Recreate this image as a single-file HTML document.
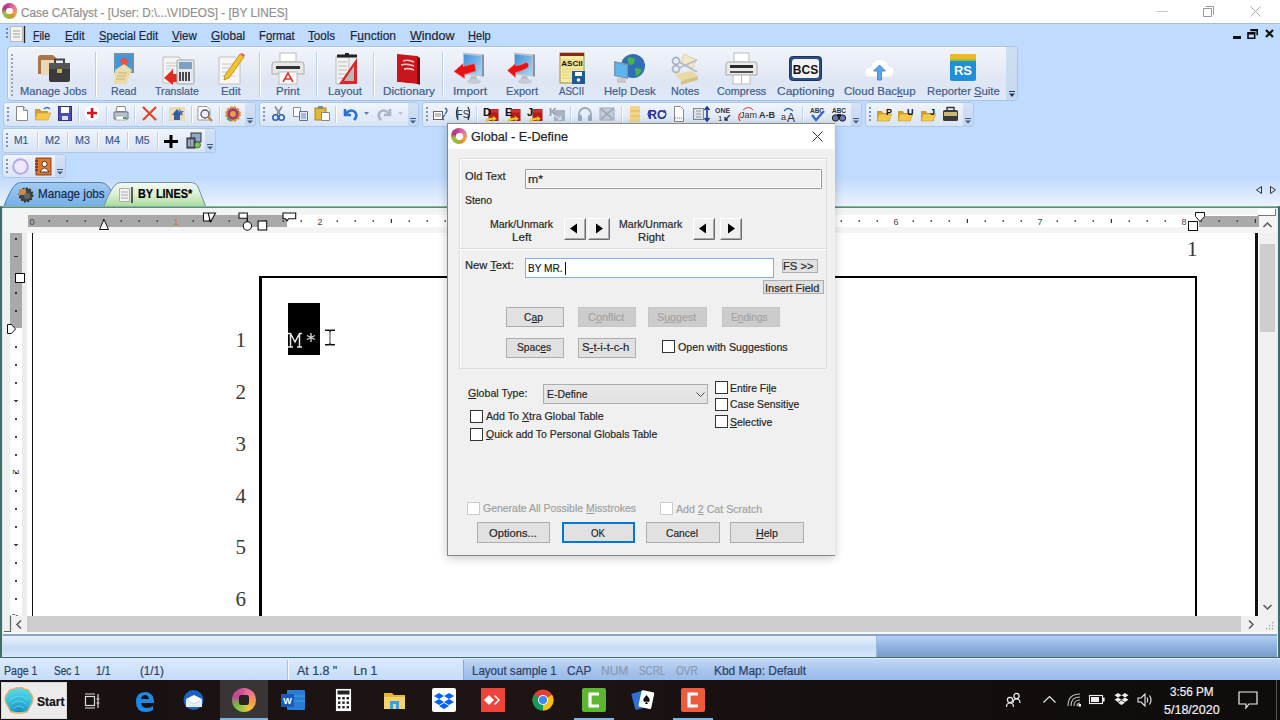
<!DOCTYPE html>
<html><head><meta charset="utf-8"><style>
*{box-sizing:border-box;margin:0;padding:0}
html,body{width:1280px;height:720px;overflow:hidden;background:#BFDBFF;font-family:"Liberation Sans",sans-serif;position:relative}
.a{position:absolute}
.t{position:absolute;white-space:nowrap;line-height:1;transform-origin:0 0;-webkit-text-stroke:0.2px currentColor}
.t u{text-decoration:underline;text-decoration-thickness:1px;text-underline-offset:1px}
svg{position:absolute;overflow:visible}
</style></head><body>
<div class="a" style="left:0;top:0;width:1280px;height:23px;background:#fff"></div>
<div class="a" style="left:1.5px;top:3px;width:15.5px;height:15.5px;border-radius:50%;background:conic-gradient(from 0deg,#D0509A 0deg,#E8789A 60deg,#F2A048 110deg,#E88A30 150deg,#8CC040 200deg,#A8C040 250deg,#B03A80 290deg,#C8408E 360deg)"></div><div class="a" style="left:6px;top:7.5px;width:6.5px;height:6.5px;border-radius:45%;background:#fff"></div>
<div class="t" id="t0" style="left:20.60px;top:5.99px;font-size:13.30px;color:#8F8F8F;transform:scaleX(0.8841);">Case CATalyst - [User: D:\...\VIDEOS] - [BY LINES]</div>
<div class="a" style="left:1157px;top:11px;width:11px;height:1px;background:#C9C9C9"></div>
<svg style="left:1203px;top:6px" width="11" height="11"><path d="M2.5 .5h8v8M.5 2.5h8v8h-8z" fill="none" stroke="#9A9A9A"/></svg>
<svg style="left:1250px;top:6px" width="11" height="11"><path d="M.5 .5l10 10M10.5 .5l-10 10" stroke="#A8A8A8" stroke-width="1"/></svg>
<div class="a" style="left:0;top:23px;width:1280px;height:24px;background:#BFDBFF;border-top:1px solid #A7BEDD"></div>
<div class="a" style="left:6px;top:28px;width:2px;height:12px;background:repeating-linear-gradient(#6F88AE 0 2px,transparent 2px 4px)"></div>
<svg style="left:10px;top:25px" width="16" height="19"><rect x=".5" y="1.5" width="12" height="15" fill="#F2F2F2" stroke="#B8B8B8"/><path d="M3 6h7M3 9h7M3 12h7" stroke="#A0A0A0"/><path d="M14.5 1v17" stroke="#222" stroke-width="1.3"/></svg>
<div class="t" id="t1" style="left:33.00px;top:30.27px;font-size:12.50px;color:#1B2638;transform:scaleX(0.8500);"><u>F</u>ile</div>
<div class="t" id="t2" style="left:65.00px;top:30.27px;font-size:12.50px;color:#1B2638;transform:scaleX(0.9091);"><u>E</u>dit</div>
<div class="t" id="t3" style="left:99.00px;top:30.27px;font-size:12.50px;color:#1B2638;transform:scaleX(0.8939);"><u>S</u>pecial Edit</div>
<div class="t" id="t4" style="left:172.00px;top:30.27px;font-size:12.50px;color:#1B2638;transform:scaleX(0.9259);"><u>V</u>iew</div>
<div class="t" id="t5" style="left:211.00px;top:30.27px;font-size:12.50px;color:#1B2638;transform:scaleX(0.9444);"><u>G</u>lobal</div>
<div class="t" id="t6" style="left:259.00px;top:30.27px;font-size:12.50px;color:#1B2638;transform:scaleX(0.9000);">F<u>o</u>rmat</div>
<div class="t" id="t7" style="left:308.00px;top:30.27px;font-size:12.50px;color:#1B2638;transform:scaleX(0.9310);"><u>T</u>ools</div>
<div class="t" id="t8" style="left:350.00px;top:30.27px;font-size:12.50px;color:#1B2638;transform:scaleX(0.9583);">F<u>u</u>nction</div>
<div class="t" id="t9" style="left:410.00px;top:30.27px;font-size:12.50px;color:#1B2638;transform:scaleX(1.0000);"><u>W</u>indow</div>
<div class="t" id="t10" style="left:468.00px;top:30.27px;font-size:12.50px;color:#1B2638;transform:scaleX(0.8846);"><u>H</u>elp</div>
<div class="a" style="left:1233px;top:36px;width:8px;height:2.5px;background:#111"></div>
<svg style="left:1247px;top:29px" width="11" height="10"><path d="M3.5 .8h6.7v5.5M1 3.8h6.7v5.5H1z" fill="none" stroke="#111" stroke-width="1.6"/><path d="M1 4.5h6.7" stroke="#111" stroke-width="2.2"/><path d="M3.5 1.2h6.7" stroke="#111" stroke-width="2"/></svg>
<svg style="left:1265px;top:29px" width="9" height="9"><path d="M1 1l7 7M8 1l-7 7" stroke="#111" stroke-width="2.2"/></svg>
<div class="a" style="left:7px;top:46px;width:1011px;height:55px;border:1px solid #A9C1E2;border-radius:4px;background:linear-gradient(#F1F4FA 0%,#E8ECF6 40%,#DFE6F3 62%,#DDE8F8 100%);box-shadow:inset 1px 1px 0 #F8FAFE"></div>
<div class="a" style="left:1006px;top:47px;width:11px;height:53px;background:linear-gradient(#D0DEF2,#C6D8F0);border-radius:0 3px 3px 0"></div>
<svg style="left:1008px;top:91px" width="8" height="7"><path d="M1 .5h6" stroke="#1E3A6A"/><path d="M1 2.5h6l-3 3.5z" fill="#1E3A6A"/></svg>
<div class="a" style="left:11px;top:54px;width:2px;height:42px;background:repeating-linear-gradient(#8DA4C4 0 2px,transparent 2px 4px)"></div>
<div class="a" style="left:95px;top:52px;width:1px;height:45px;background:#BCCFE8;box-shadow:1px 0 0 #fff"></div>
<div class="a" style="left:259px;top:52px;width:1px;height:45px;background:#BCCFE8;box-shadow:1px 0 0 #fff"></div>
<div class="a" style="left:316px;top:52px;width:1px;height:45px;background:#BCCFE8;box-shadow:1px 0 0 #fff"></div>
<div class="a" style="left:373px;top:52px;width:1px;height:45px;background:#BCCFE8;box-shadow:1px 0 0 #fff"></div>
<div class="a" style="left:442px;top:52px;width:1px;height:45px;background:#BCCFE8;box-shadow:1px 0 0 #fff"></div>
<div class="t" id="t11" style="left:20.30px;top:85.87px;font-size:11.80px;color:#3D5C8E;transform:scaleX(0.9437);">Manage Jobs</div>
<div class="t" id="t12" style="left:111.30px;top:85.87px;font-size:11.80px;color:#3D5C8E;transform:scaleX(0.9000);">Read</div>
<div class="t" id="t13" style="left:155.40px;top:85.87px;font-size:11.80px;color:#3D5C8E;transform:scaleX(0.9000);">Translate</div>
<div class="t" id="t14" style="left:221.40px;top:85.87px;font-size:11.80px;color:#3D5C8E;transform:scaleX(0.9650);">Edit</div>
<div class="t" id="t15" style="left:276.40px;top:85.87px;font-size:11.80px;color:#3D5C8E;transform:scaleX(0.9750);">Print</div>
<div class="t" id="t16" style="left:328.20px;top:85.87px;font-size:11.80px;color:#3D5C8E;transform:scaleX(0.9571);">Layout</div>
<div class="t" id="t17" style="left:382.50px;top:85.87px;font-size:11.80px;color:#3D5C8E;transform:scaleX(0.9885);">Dictionary</div>
<div class="t" id="t18" style="left:453.00px;top:85.87px;font-size:11.80px;color:#3D5C8E;transform:scaleX(1.0212);">Import</div>
<div class="t" id="t19" style="left:505.70px;top:85.87px;font-size:11.80px;color:#3D5C8E;transform:scaleX(0.9382);">Export</div>
<div class="t" id="t20" style="left:559.00px;top:85.87px;font-size:11.80px;color:#3D5C8E;transform:scaleX(0.8161);">ASCII</div>
<div class="t" id="t21" style="left:603.60px;top:85.87px;font-size:11.80px;color:#3D5C8E;transform:scaleX(0.9481);">Help Desk</div>
<div class="t" id="t22" style="left:670.70px;top:85.87px;font-size:11.80px;color:#3D5C8E;transform:scaleX(0.9129);">Notes</div>
<div class="t" id="t23" style="left:716.50px;top:85.87px;font-size:11.80px;color:#3D5C8E;transform:scaleX(0.9167);">Compress</div>
<div class="t" id="t24" style="left:776.70px;top:85.87px;font-size:11.80px;color:#3D5C8E;transform:scaleX(1.0161);">Captioning</div>
<div class="t" id="t25" style="left:844.30px;top:85.87px;font-size:11.80px;color:#3D5C8E;transform:scaleX(0.9753);">Cloud Bac<u>k</u>up</div>
<div class="t" id="t26" style="left:926.70px;top:85.87px;font-size:11.80px;color:#3D5C8E;transform:scaleX(0.9566);">Reporter <u>S</u>uite</div>
<svg style="left:37px;top:52px" width="34" height="32" viewBox="0 0 34 32">
<path d="M1 6q0-3 3-3h12l3 3v16H1z" fill="#A8764A"/><path d="M4 8h14v15H4z" fill="#E9D8B8"/>
<rect x="12" y="11" width="21" height="19" rx="2" fill="#3A3A3A"/><rect x="12" y="11" width="21" height="6" fill="#555"/>
<path d="M18 11V7.5h9V11" fill="none" stroke="#444" stroke-width="2"/><rect x="20" y="17" width="5" height="4" fill="#C8B34A"/></svg>
<svg style="left:112px;top:52px" width="24" height="33" viewBox="0 0 24 33">
<rect x="2" y="1" width="20" height="20" fill="#6F8FAE"/><rect x="4" y="3" width="16" height="16" fill="#3A9CE0"/>
<path d="M12 5l6 5h-3v3H9v-3H6z" fill="#E8504A"/>
<path d="M3 18l9-6 8 6-6 14H2z" fill="#EADBA8"/><path d="M6 21h9M5 24h9M4 27h9" stroke="#C9B27A"/></svg>
<svg style="left:162px;top:54px" width="33" height="31" viewBox="0 0 33 31">
<path d="M1 3h16l4 4v22H1z" fill="#F4F4F4" stroke="#BDBDBD"/><path d="M4 9h12M4 12h12M4 15h8" stroke="#C8C8C8"/>
<path d="M2 24l9-9v5h9v8h-9v3z" fill="#E02A20"/>
<rect x="15" y="6" width="17" height="24" rx="1" fill="#E5E9EE" stroke="#9AA"/><rect x="17" y="8" width="13" height="7" fill="#7FA0C0"/>
<path d="M18 18v9M21 18v9M24 18v9M27 18v9" stroke="#222" stroke-width="1.6"/></svg>
<svg style="left:218px;top:52px" width="27" height="33" viewBox="0 0 27 33">
<path d="M1 5h16l5 5v22H1z" fill="#F6F6F6" stroke="#C0C0C0"/><path d="M4 12h13M4 16h13M4 20h13M4 24h13" stroke="#C8C8C8"/>
<path d="M22 2l4 3-15 21-5 2 1-5z" fill="#F2C230" stroke="#B58A10" stroke-width=".8"/><path d="M22 2l4 3 1-2-3-2z" fill="#E06070"/></svg>
<svg style="left:271px;top:52px" width="34" height="33" viewBox="0 0 34 33">
<rect x="9" y="1" width="16" height="9" fill="#fff" stroke="#BBB"/>
<path d="M3 10h28q2 0 2 3v9H1v-9q0-3 2-3z" fill="#E8E8E8" stroke="#AAA"/><rect x="5" y="14" width="24" height="3" fill="#333"/>
<rect x="8" y="20" width="18" height="12" fill="#fff" stroke="#BBB"/><path d="M12 30l5-9 5 9M14 27h6" fill="none" stroke="#E53A2A" stroke-width="1.6"/></svg>
<svg style="left:333px;top:52px" width="27" height="33" viewBox="0 0 27 33">
<path d="M3 5h13v27H3z" fill="#F2F2F2" stroke="#BBB"/><path d="M5 10h9M5 14h9M5 18h9M5 22h9M5 26h9" stroke="#BBB"/>
<path d="M4 4h20" stroke="#222" stroke-width="3"/><path d="M12 2h4" stroke="#222" stroke-width="2"/>
<path d="M24 6v26H6z" fill="#D8262A"/><path d="M21 14v15h-10z" fill="#B9B9B9"/></svg>
<svg style="left:395px;top:52px" width="27" height="33" viewBox="0 0 27 33">
<path d="M2 2l20 2v28L2 30z" fill="#C9151B"/><path d="M22 4l3 2v27l-3-1z" fill="#7A0A0E"/><path d="M2 30l20 2 3 1-20-1z" fill="#E8E8E8"/>
<path d="M8 9q5-2 11 1M6 13q6-2 13 1M9 17q5-1 10 1" stroke="#F6C8C8" stroke-width="1.6" fill="none"/></svg>
<svg style="left:453px;top:52px" width="32" height="32" viewBox="0 0 32 32"><defs><linearGradient id="scri" x1="0" y1="0" x2="1" y2="1"><stop offset="0" stop-color="#3E8ED6"/><stop offset="1" stop-color="#A6D8F6"/></linearGradient></defs><path d="M10 0.5l20 2v22l-20-2z" fill="#B9C3CF"/><path d="M11 2.5l17 1.8v18.5l-17-1.8z" fill="url(#scri)"/><path d="M30 2.5v22" stroke="#8894A4" stroke-width="2"/><path d="M18 24h5l2 5h-9z" fill="#B8BEC6"/><ellipse cx="21" cy="29.5" rx="7" ry="2.5" fill="#C6CBD2"/><path d="M1 19.5L10 11.5V14.5L21.5 11.5L23 19L11.5 22.5V26.5Z" fill="#E81212" stroke="#F27070" stroke-width=".6"/></svg>
<svg style="left:507px;top:52px" width="30" height="32" viewBox="0 0 30 32"><defs><linearGradient id="scre" x1="0" y1="0" x2="1" y2="1"><stop offset="0" stop-color="#3E8ED6"/><stop offset="1" stop-color="#A6D8F6"/></linearGradient></defs><path d="M7 0.5l20 2v22l-20-2z" fill="#B9C3CF"/><path d="M8 2.5l17 1.8v18.5l-17-1.8z" fill="url(#scre)"/><path d="M27 2.5v22" stroke="#8894A4" stroke-width="2"/><path d="M15 24h5l2 5h-9z" fill="#B8BEC6"/><ellipse cx="18" cy="29.5" rx="7" ry="2.5" fill="#C6CBD2"/><path d="M.5 18.5L8.5 11.5V14Q15 13 19 10.5Q22.5 11 21 15.5Q15 19 8.5 20.5V25.5Z" fill="#E81212" stroke="#F27070" stroke-width=".6"/></svg>
<svg style="left:559px;top:52px" width="27" height="33" viewBox="0 0 27 33">
<rect x="1" y="1" width="24" height="30" fill="#F6ECA0" stroke="#A08A50"/><rect x="1" y="1" width="24" height="3" fill="#8A2A1A"/>
<path d="M3 8h20M3 11h20M3 14h20M3 17h20M3 20h20M3 23h20M3 26h20" stroke="#E0CF80"/>
<text x="13" y="14" font-family="Liberation Sans" font-weight="bold" font-size="8" text-anchor="middle" fill="#111">ASCII</text>
<rect x="13" y="19" width="13" height="13" fill="#1E5A9A"/><rect x="16" y="20" width="7" height="4" fill="#fff"/><circle cx="19.5" cy="28" r="1.8" fill="#fff"/></svg>
<svg style="left:613px;top:52px" width="33" height="33" viewBox="0 0 33 33">
<circle cx="20" cy="14" r="12" fill="#2E6FB8"/><path d="M14 6q4-2 8 1l-1 5-5 1zM22 16q4 0 7 2-2 5-6 6z" fill="#4CAF50"/>
<path d="M1 9l14 3v15L1 24z" fill="#7C95B0"/><path d="M2.5 11l11 2.4v12L2.5 23z" fill="#5AB6F0"/>
<path d="M4 26h8l1 5H4z" fill="#C8C8C8"/></svg>
<svg style="left:670px;top:52px" width="30" height="33" viewBox="0 0 30 33">
<path d="M14 2l12 6-3 8-12-5z" fill="#F3E9C8" stroke="#D7C99A" stroke-width=".8"/>
<circle cx="6" cy="9" r="3.5" fill="none" stroke="#A9B4C2" stroke-width="1.8"/><circle cx="6" cy="17" r="3.5" fill="none" stroke="#A9B4C2" stroke-width="1.8"/>
<path d="M9 10l18 10M9 16l18-8" stroke="#B3BCC8" stroke-width="1.8"/>
<path d="M5 22l17-3 6 5-17 5z" fill="#EAD9A2"/><path d="M11 29l17-5v4l-17 5z" fill="#D7C387"/></svg>
<svg style="left:725px;top:52px" width="33" height="33" viewBox="0 0 33 33">
<rect x="9" y="1" width="15" height="9" fill="#fff" stroke="#BBB"/>
<path d="M3 10h27q2 0 2 3v10H1V13q0-3 2-3z" fill="#EAEAEA" stroke="#AAA"/><rect x="5" y="13" width="23" height="3" fill="#2A2A2A"/><rect x="5" y="19" width="23" height="2" fill="#555"/>
<rect x="8" y="23" width="17" height="9" fill="#fff" stroke="#BBB"/><path d="M16.5 23v9" stroke="#BBB"/></svg>
<svg style="left:789px;top:56px" width="33" height="25" viewBox="0 0 33 25">
<rect x=".5" y=".5" width="32" height="24" rx="3" fill="#2C4E86" stroke="#1B345E"/><rect x="3" y="3" width="27" height="19" rx="3" fill="#F2F2F2"/>
<text x="16.5" y="17.5" font-family="Liberation Sans" font-weight="bold" font-size="12" text-anchor="middle" fill="#111">BCS</text></svg>
<svg style="left:864px;top:57px" width="31" height="26" viewBox="0 0 31 26">
<path d="M7 20q-6 0-6-5t6-5q1-8 9-8 7 0 9 7 5 0 5 5.5T25 20z" fill="#fff" stroke="#E3E8EE"/>
<path d="M15.5 8l-6 6h4v9h4v-9h4z" fill="#5EA3EE" stroke="#3A78C8" stroke-width=".8"/></svg>
<svg style="left:950px;top:54px" width="27" height="28" viewBox="0 0 27 28">
<rect x="0" y="0" width="26" height="27" rx="2" fill="#1E8FD8"/><path d="M0 2q0-2 2-2h22q2 0 2 2v3H0z" fill="#F5B820"/><path d="M0 5h26v2H0z" fill="#8DC63F"/>
<text x="13" y="21" font-family="Liberation Sans" font-weight="bold" font-size="13" text-anchor="middle" fill="#fff">RS</text></svg>
<div class="a" style="left:3px;top:102px;width:253px;height:25px;border:1px solid #B0C8E6;border-radius:3px;background:linear-gradient(#F0F5FC,#E4ECF8 50%,#D8E4F5)"></div><div class="a" style="left:7px;top:107px;width:2px;height:15px;background:repeating-linear-gradient(#7D94B8 0 2px,transparent 2px 4px)"></div><div class="a" style="left:245px;top:103px;width:10px;height:23px;background:linear-gradient(#D4E2F5,#C2D5F0);border-radius:0 2px 2px 0"></div><svg style="left:246px;top:118px" width="8" height="7"><path d="M1 .5h6" stroke="#3C5A88"/><path d="M1 2.5h6l-3 3z" fill="#3C5A88"/></svg>
<div class="a" style="left:259px;top:102px;width:160px;height:25px;border:1px solid #B0C8E6;border-radius:3px;background:linear-gradient(#F0F5FC,#E4ECF8 50%,#D8E4F5)"></div><div class="a" style="left:263px;top:107px;width:2px;height:15px;background:repeating-linear-gradient(#7D94B8 0 2px,transparent 2px 4px)"></div><div class="a" style="left:408px;top:103px;width:10px;height:23px;background:linear-gradient(#D4E2F5,#C2D5F0);border-radius:0 2px 2px 0"></div><svg style="left:409px;top:118px" width="8" height="7"><path d="M1 .5h6" stroke="#3C5A88"/><path d="M1 2.5h6l-3 3z" fill="#3C5A88"/></svg>
<div class="a" style="left:422px;top:102px;width:440px;height:25px;border:1px solid #B0C8E6;border-radius:3px;background:linear-gradient(#F0F5FC,#E4ECF8 50%,#D8E4F5)"></div><div class="a" style="left:426px;top:107px;width:2px;height:15px;background:repeating-linear-gradient(#7D94B8 0 2px,transparent 2px 4px)"></div><div class="a" style="left:851px;top:103px;width:10px;height:23px;background:linear-gradient(#D4E2F5,#C2D5F0);border-radius:0 2px 2px 0"></div><svg style="left:852px;top:118px" width="8" height="7"><path d="M1 .5h6" stroke="#3C5A88"/><path d="M1 2.5h6l-3 3z" fill="#3C5A88"/></svg>
<div class="a" style="left:865px;top:102px;width:109px;height:25px;border:1px solid #B0C8E6;border-radius:3px;background:linear-gradient(#F0F5FC,#E4ECF8 50%,#D8E4F5)"></div><div class="a" style="left:869px;top:107px;width:2px;height:15px;background:repeating-linear-gradient(#7D94B8 0 2px,transparent 2px 4px)"></div><div class="a" style="left:963px;top:103px;width:10px;height:23px;background:linear-gradient(#D4E2F5,#C2D5F0);border-radius:0 2px 2px 0"></div><svg style="left:964px;top:118px" width="8" height="7"><path d="M1 .5h6" stroke="#3C5A88"/><path d="M1 2.5h6l-3 3z" fill="#3C5A88"/></svg>
<div class="a" style="left:2px;top:128px;width:214px;height:25px;border:1px solid #B0C8E6;border-radius:3px;background:linear-gradient(#F0F5FC,#E4ECF8 50%,#D8E4F5)"></div><div class="a" style="left:6px;top:133px;width:2px;height:15px;background:repeating-linear-gradient(#7D94B8 0 2px,transparent 2px 4px)"></div><div class="a" style="left:205px;top:129px;width:10px;height:23px;background:linear-gradient(#D4E2F5,#C2D5F0);border-radius:0 2px 2px 0"></div><svg style="left:206px;top:144px" width="8" height="7"><path d="M1 .5h6" stroke="#3C5A88"/><path d="M1 2.5h6l-3 3z" fill="#3C5A88"/></svg>
<div class="a" style="left:2px;top:154px;width:64px;height:24px;border:1px solid #B0C8E6;border-radius:3px;background:linear-gradient(#F0F5FC,#E4ECF8 50%,#D8E4F5)"></div><div class="a" style="left:6px;top:159px;width:2px;height:14px;background:repeating-linear-gradient(#7D94B8 0 2px,transparent 2px 4px)"></div><div class="a" style="left:55px;top:155px;width:10px;height:22px;background:linear-gradient(#D4E2F5,#C2D5F0);border-radius:0 2px 2px 0"></div><svg style="left:56px;top:169px" width="8" height="7"><path d="M1 .5h6" stroke="#3C5A88"/><path d="M1 2.5h6l-3 3z" fill="#3C5A88"/></svg>
<div class="a" style="left:78px;top:106px;width:1px;height:17px;background:#BFD0E8;box-shadow:1px 0 0 #fff"></div>
<div class="a" style="left:106px;top:106px;width:1px;height:17px;background:#BFD0E8;box-shadow:1px 0 0 #fff"></div>
<div class="a" style="left:134px;top:106px;width:1px;height:17px;background:#BFD0E8;box-shadow:1px 0 0 #fff"></div>
<div class="a" style="left:162px;top:106px;width:1px;height:17px;background:#BFD0E8;box-shadow:1px 0 0 #fff"></div>
<div class="a" style="left:191px;top:106px;width:1px;height:17px;background:#BFD0E8;box-shadow:1px 0 0 #fff"></div>
<div class="a" style="left:219px;top:106px;width:1px;height:17px;background:#BFD0E8;box-shadow:1px 0 0 #fff"></div>
<div class="a" style="left:335px;top:106px;width:1px;height:17px;background:#BFD0E8;box-shadow:1px 0 0 #fff"></div>
<div class="a" style="left:476px;top:106px;width:1px;height:17px;background:#BFD0E8;box-shadow:1px 0 0 #fff"></div>
<div class="a" style="left:570px;top:106px;width:1px;height:17px;background:#BFD0E8;box-shadow:1px 0 0 #fff"></div>
<div class="a" style="left:621px;top:106px;width:1px;height:17px;background:#BFD0E8;box-shadow:1px 0 0 #fff"></div>
<div class="a" style="left:802px;top:106px;width:1px;height:17px;background:#BFD0E8;box-shadow:1px 0 0 #fff"></div>
<div class="a" style="left:37px;top:132px;width:1px;height:17px;background:#BFD0E8;box-shadow:1px 0 0 #fff"></div>
<div class="a" style="left:67px;top:132px;width:1px;height:17px;background:#BFD0E8;box-shadow:1px 0 0 #fff"></div>
<div class="a" style="left:97px;top:132px;width:1px;height:17px;background:#BFD0E8;box-shadow:1px 0 0 #fff"></div>
<div class="a" style="left:127px;top:132px;width:1px;height:17px;background:#BFD0E8;box-shadow:1px 0 0 #fff"></div>
<div class="a" style="left:157px;top:132px;width:1px;height:17px;background:#BFD0E8;box-shadow:1px 0 0 #fff"></div>
<svg style="left:16px;top:106px" width="12" height="15" viewBox="0 0 12 15"><path d="M.5 .5h7l4 4v10h-11z" fill="#fff" stroke="#8A8A8A"/><path d="M7.5 .5v4h4" fill="#DDD" stroke="#8A8A8A"/></svg>
<svg style="left:34px;top:106px" width="17" height="15" viewBox="0 0 17 15"><path d="M1 3h5l1 2h7v9H1z" fill="#C9A030"/><path d="M3 7h14l-3 7H1z" fill="#F5C84A" stroke="#C9A030" stroke-width=".6"/><path d="M10 3q3-3 6 0" fill="none" stroke="#3A6AB0" stroke-width="1.4"/></svg>
<svg style="left:58px;top:106px" width="14" height="15" viewBox="0 0 14 15"><rect x=".5" y=".5" width="13" height="14" fill="#4A4FB0" stroke="#2E3380"/><rect x="3" y="1" width="8" height="6" fill="#fff"/><rect x="4" y="10" width="6" height="4" fill="#DDE"/></svg>
<svg style="left:84px;top:105px" width="16" height="16" viewBox="0 0 16 16"><circle cx="8" cy="8" r="7.5" fill="#fff"/><path d="M8 3v10M3 8h10" stroke="#E0101A" stroke-width="2.6"/></svg>
<svg style="left:113px;top:106px" width="16" height="15" viewBox="0 0 16 15"><path d="M4 .5h8l1 5H3z" fill="#fff" stroke="#888"/><path d="M1 6h14v7H1z" fill="#B9C4D0" stroke="#6A7888"/><rect x="3" y="10" width="10" height="4" fill="#fff" stroke="#888" stroke-width=".6"/><rect x="10" y="11" width="3" height="2" fill="#2DA84A"/></svg>
<svg style="left:141px;top:106px" width="17" height="15" viewBox="0 0 17 15"><path d="M2 1l13 13M15 1L2 14" stroke="#E0452A" stroke-width="2.2"/></svg>
<svg style="left:169px;top:106px" width="16" height="15" viewBox="0 0 16 15"><rect x="0" y="1" width="16" height="14" fill="#E9DDB6"/><path d="M3 9l5-6 5 6-2 0v5H5V9z" fill="#3A5AA0"/><path d="M10 2l2 3 3 0-2 2 1 3-3-2z" fill="#4A6CC0"/></svg>
<svg style="left:197px;top:106px" width="16" height="16" viewBox="0 0 16 16"><path d="M1 .5h9l3 3V14H1z" fill="#fff" stroke="#999"/><circle cx="8" cy="8" r="4" fill="#EEF" stroke="#555" stroke-width="1.3"/><path d="M11 11l4 4" stroke="#C08030" stroke-width="2.2"/></svg>
<svg style="left:225px;top:106px" width="16" height="16" viewBox="0 0 16 16"><circle cx="8" cy="8" r="6.5" fill="#9B3A7A" stroke="#E08A20" stroke-width="2.6" stroke-dasharray="2.2 1.2"/><circle cx="8" cy="8" r="3" fill="#E6A23A"/><path d="M2 12l4 3" stroke="#4AA84A" stroke-width="2"/></svg>
<svg style="left:272px;top:106px" width="13" height="15" viewBox="0 0 13 15"><path d="M3 .5l5 8M10 .5l-5 8" stroke="#7A8798" stroke-width="1.5"/><circle cx="3.5" cy="11.5" r="2.7" fill="none" stroke="#2A63B8" stroke-width="1.6"/><circle cx="9.5" cy="11.5" r="2.7" fill="none" stroke="#2A63B8" stroke-width="1.6"/></svg>
<svg style="left:293px;top:106px" width="15" height="15" viewBox="0 0 15 15"><path d="M.5 1.5h7v9h-7z" fill="#fff" stroke="#7E8FA8"/><path d="M6.5 5.5h8v9h-8z" fill="#DDE7F4" stroke="#5A74A0"/><path d="M8 8h5M8 10h5M8 12h5" stroke="#7E8FA8"/></svg>
<svg style="left:314px;top:106px" width="16" height="15" viewBox="0 0 16 15"><rect x="1" y="2" width="11" height="12" fill="#E2B83A" stroke="#A88420"/><rect x="4" y="0" width="5" height="3" fill="#888"/><path d="M7.5 6.5h8v8h-8z" fill="#fff" stroke="#888"/></svg>
<svg style="left:342px;top:106px" width="17" height="15" viewBox="0 0 17 15"><path d="M3 3v6h6" fill="none" stroke="#2A73D0" stroke-width="2.6"/><path d="M3 9q5-7 10-3 3 4-1 8" fill="none" stroke="#2A73D0" stroke-width="2.6"/></svg>
<svg style="left:364px;top:112px" width="5" height="3" viewBox="0 0 5 3"><path d="M0 0h5l-2.5 3z" fill="#5A7AA8"/></svg>
<svg style="left:377px;top:106px" width="16" height="15" viewBox="0 0 16 15"><path d="M13 3v6H7" fill="none" stroke="#A9B6C6" stroke-width="2.6"/><path d="M13 9q-5-7-10-3-3 4 1 8" fill="none" stroke="#A9B6C6" stroke-width="2.6"/></svg>
<svg style="left:398px;top:112px" width="5" height="3" viewBox="0 0 5 3"><path d="M0 0h5l-2.5 3z" fill="#B9C5D6"/></svg>
<svg style="left:433px;top:107px" width="17" height="14" viewBox="0 0 17 14"><rect x=".5" y="4.5" width="9" height="8" fill="#fff" stroke="#666"/><path d="M2 7h6M2 9h6" stroke="#888"/><path d="M12 1q4 2 0 6M11 13q-3-2 1-5" fill="none" stroke="#3050A0" stroke-width="1.3"/></svg>
<svg style="left:454px;top:106px" width="18" height="15" viewBox="0 0 18 15"><path d="M4 1q-3 6 0 13M14 1q3 6 0 13" fill="none" stroke="#333" stroke-width="1.3"/><text x="9" y="11.5" font-family="Liberation Sans" font-size="10" text-anchor="middle" fill="#333">FS</text></svg>
<svg style="left:483px;top:106px" width="17" height="16" viewBox="0 0 17 16"><rect x="5.5" y="3" width="10" height="12" fill="#B81A1A"/><rect x="6" y="3.5" width="9" height="3" fill="#D03030"/><text x="0" y="10" font-family="Liberation Sans" font-weight="bold" font-size="11" fill="#111">D</text><path d="M2.5 14.2Q6 11.5 10.5 11.8L10 10l3.5 2.8-3.3 2.2.2-1.6Q6 14 3.5 15.5z" fill="#F5E020" stroke="#E0B000" stroke-width=".5"/></svg>
<svg style="left:505px;top:106px" width="17" height="16" viewBox="0 0 17 16"><rect x="5.5" y="3" width="10" height="12" fill="#B81A1A"/><rect x="6" y="3.5" width="9" height="3" fill="#D03030"/><text x="0" y="10" font-family="Liberation Sans" font-weight="bold" font-size="11" fill="#111">E</text><path d="M2.5 14.2Q6 11.5 10.5 11.8L10 10l3.5 2.8-3.3 2.2.2-1.6Q6 14 3.5 15.5z" fill="#F5E020" stroke="#E0B000" stroke-width=".5"/></svg>
<svg style="left:527px;top:106px" width="17" height="16" viewBox="0 0 17 16"><rect x="5.5" y="3" width="10" height="12" fill="#B81A1A"/><rect x="6" y="3.5" width="9" height="3" fill="#D03030"/><text x="0" y="10" font-family="Liberation Sans" font-weight="bold" font-size="11" fill="#111">J</text><path d="M2.5 14.2Q6 11.5 10.5 11.8L10 10l3.5 2.8-3.3 2.2.2-1.6Q6 14 3.5 15.5z" fill="#F5E020" stroke="#E0B000" stroke-width=".5"/></svg>
<svg style="left:549px;top:106px" width="17" height="16" viewBox="0 0 17 16"><rect x="5" y="4" width="11" height="11" fill="#A8B4C4"/><text x="0" y="9.5" font-family="Liberation Sans" font-weight="bold" font-size="10.5" fill="#8A9AB0">K</text><path d="M5 9l6 4M9 14l3-1-1-3" fill="none" stroke="#E0E6EE" stroke-width="1.2"/></svg>
<svg style="left:577px;top:106px" width="16" height="15" viewBox="0 0 16 15"><path d="M2 10V8a6 6 0 0 1 12 0v2" fill="none" stroke="#9AA8BA" stroke-width="1.8"/><rect x="1" y="9" width="4" height="6" rx="1.5" fill="#9AA8BA"/><rect x="11" y="9" width="4" height="6" rx="1.5" fill="#9AA8BA"/></svg>
<svg style="left:599px;top:106px" width="16" height="15" viewBox="0 0 16 15"><rect x="1" y="2" width="14" height="12" fill="#C4CCD6" stroke="#A0ABB8"/><path d="M2 3l12 10M14 3L2 13" stroke="#98A4B4" stroke-width="1.6"/></svg>
<svg style="left:630px;top:106px" width="10" height="16" viewBox="0 0 10 16"><rect x="0" y="0" width="10" height="16" fill="#F2D58A"/><path d="M0 5h10M0 10h10" stroke="#E0BA60"/></svg>
<svg style="left:648px;top:106px" width="18" height="15" viewBox="0 0 18 15"><text x="9" y="12.5" font-family="Liberation Sans" font-weight="bold" font-size="12" text-anchor="middle" fill="#2A2A9A">RC</text><path d="M1.5 4l-1.5 4 1.5 4M16.5 4l1.5 4-1.5 4" fill="none" stroke="#2A2A9A" stroke-width="1.2"/></svg>
<svg style="left:674px;top:106px" width="10" height="16" viewBox="0 0 10 16"><path d="M.5 .5h6l3 3V15.5h-9z" fill="#fff" stroke="#888"/><path d="M1 12h8" stroke="#777" stroke-dasharray="1 1"/></svg>
<svg style="left:693px;top:106px" width="17" height="16" viewBox="0 0 17 16"><rect x=".5" y="2.5" width="10" height="11" fill="#DDE3EA" stroke="#888"/><path d="M3 5h5M3 8h5M3 11h5" stroke="#999"/><path d="M14 1v14M11.5 4L14 1l2.5 3M11.5 12l2.5 3 2.5-3" fill="none" stroke="#1A3A9A" stroke-width="1.6"/></svg>
<svg style="left:715px;top:106px" width="17" height="16" viewBox="0 0 17 16"><text x="0" y="7" font-family="Liberation Sans" font-weight="bold" font-size="7" fill="#334">ONE</text><text x="3" y="15" font-family="Liberation Sans" font-size="8" fill="#334">1</text><path d="M15 9l-5 5M10 11v3h3" fill="none" stroke="#334" stroke-width="1.3"/></svg>
<svg style="left:737px;top:106px" width="17" height="16" viewBox="0 0 17 16"><path d="M3 15q-3-5 1-8" fill="none" stroke="#E03030" stroke-width="1.2"/><path d="M6 4q6-5 10 0" fill="none" stroke="#E03030" stroke-width="1"/><text x="3" y="12" font-family="Liberation Sans" font-size="9" fill="#333">Jam</text></svg>
<svg style="left:758px;top:106px" width="18" height="15" viewBox="0 0 18 15"><text x="9" y="11.5" font-family="Liberation Sans" font-weight="bold" font-size="9" text-anchor="middle" fill="#333">A-B</text></svg>
<svg style="left:781px;top:106px" width="16" height="16" viewBox="0 0 16 16"><text x="0" y="14" font-family="Liberation Sans" font-size="9" fill="#333">a</text><text x="6" y="15.5" font-family="Liberation Sans" font-size="12" fill="#333">A</text><path d="M3 5q4-5 9 0" fill="none" stroke="#2A63B8" stroke-width="1.3"/></svg>
<svg style="left:809px;top:106px" width="16" height="15" viewBox="0 0 16 15"><text x="8" y="6.5" font-family="Liberation Sans" font-weight="bold" font-size="6.5" text-anchor="middle" fill="#333">ABC</text><path d="M3 9l4 5 8-9" fill="none" stroke="#3A6ACA" stroke-width="2.3"/></svg>
<svg style="left:831px;top:106px" width="16" height="16" viewBox="0 0 16 16"><text x="8" y="6.5" font-family="Liberation Sans" font-weight="bold" font-size="6.5" text-anchor="middle" fill="#333">ABC</text><circle cx="4.5" cy="12" r="3.2" fill="#6A7AB0" stroke="#222"/><circle cx="11.5" cy="12" r="3.2" fill="#6A7AB0" stroke="#222"/><rect x="6" y="8" width="4" height="3" fill="#222"/></svg>
<svg style="left:876px;top:106px" width="17" height="16" viewBox="0 0 17 16"><path d="M1 5h5l1 2h7v8H1z" fill="#C9A030"/><path d="M3 8h13l-3 7H1z" fill="#F5C84A" stroke="#C9A030" stroke-width=".6"/><text x="10" y="9" font-family="Liberation Sans" font-weight="bold" font-size="9" fill="#111">P</text></svg>
<svg style="left:897px;top:106px" width="17" height="16" viewBox="0 0 17 16"><path d="M1 5h5l1 2h7v8H1z" fill="#C9A030"/><path d="M3 8h13l-3 7H1z" fill="#F5C84A" stroke="#C9A030" stroke-width=".6"/><text x="10" y="9" font-family="Liberation Sans" font-weight="bold" font-size="9" fill="#111">U</text></svg>
<svg style="left:920px;top:106px" width="17" height="16" viewBox="0 0 17 16"><path d="M1 5h5l1 2h7v8H1z" fill="#C9A030"/><path d="M3 8h13l-3 7H1z" fill="#F5C84A" stroke="#C9A030" stroke-width=".6"/><text x="10" y="9" font-family="Liberation Sans" font-weight="bold" font-size="9" fill="#111">J</text></svg>
<svg style="left:942px;top:106px" width="17" height="16" viewBox="0 0 17 16"><rect x="1" y="4" width="15" height="11" rx="1.5" fill="#3A3A3A"/><rect x="2" y="6" width="13" height="4" fill="#C8B870"/><path d="M5 4V1.5h7V4" fill="none" stroke="#333" stroke-width="1.4"/></svg>
<div class="t" id="t27" style="left:14.40px;top:135.12px;font-size:11.50px;color:#3D5C8E;transform:scaleX(0.9000);">M1</div>
<div class="t" id="t28" style="left:44.60px;top:135.12px;font-size:11.50px;color:#3D5C8E;transform:scaleX(0.9438);">M2</div>
<div class="t" id="t29" style="left:74.60px;top:135.12px;font-size:11.50px;color:#3D5C8E;transform:scaleX(0.9313);">M3</div>
<div class="t" id="t30" style="left:104.60px;top:135.12px;font-size:11.50px;color:#3D5C8E;transform:scaleX(0.9313);">M4</div>
<div class="t" id="t31" style="left:134.80px;top:135.12px;font-size:11.50px;color:#3D5C8E;transform:scaleX(0.9187);">M5</div>
<svg style="left:164px;top:135px" width="14" height="13" viewBox="0 0 14 13"><path d="M7 0v13M0 6.5h14" stroke="#000" stroke-width="3"/></svg>
<svg style="left:186px;top:132px" width="16" height="17" viewBox="0 0 16 17"><rect x="5" y="1" width="10" height="9" fill="#8FA8C8" stroke="#333"/><rect x="1" y="6" width="8" height="10" fill="#6A7A90" stroke="#222"/><path d="M3 8v6M6 8v6" stroke="#DDD"/><circle cx="11.5" cy="13" r="3" fill="#7CC84A" stroke="#333" stroke-width=".6"/></svg>
<svg style="left:12px;top:158px" width="17" height="17" viewBox="0 0 17 17"><circle cx="8.5" cy="8.5" r="7.3" fill="#EDE8FA" stroke="#B4A6EC" stroke-width="2"/></svg>
<svg style="left:35px;top:158px" width="16" height="17" viewBox="0 0 16 17"><rect x="1" y="0" width="15" height="17" fill="#E0762A" stroke="#6A2A0A" stroke-width=".8"/><circle cx="9.5" cy="6" r="2.6" fill="#fff" stroke="#222" stroke-width=".8"/><path d="M5 14q4.5-8 9 0z" fill="#fff" stroke="#222" stroke-width=".8"/><path d="M0 3h3M0 6h3M0 9h3M0 12h3" stroke="#222"/></svg>
<div class="a" style="left:0;top:179px;width:1280px;height:28px;background:linear-gradient(#C3DCFD,#D7E7FC 50%,#EEF4FD)"></div>
<svg style="left:0;top:181px" width="120" height="27" viewBox="0 0 120 27"><defs><linearGradient id="tb1" x1="0" y1="0" x2="0" y2="1"><stop offset="0" stop-color="#A3CBF2"/><stop offset="1" stop-color="#74AEE6"/></linearGradient></defs><path d="M3.5 26 Q12 4 18 2 Q20 1.5 24 1.5 H100 Q106 1.5 110 8 L118 26z" fill="url(#tb1)" stroke="#4E7EB8" stroke-width="1"/></svg>
<svg style="left:17px;top:187px" width="17" height="15" viewBox="0 0 17 15"><circle cx="9" cy="8" r="6.5" fill="#444" stroke="#333" stroke-width="2" stroke-dasharray="2 1.3"/><rect x="2" y="2" width="7" height="6" fill="#C8894A"/><circle cx="10" cy="9" r="3" fill="#666"/></svg>
<div class="t" id="t32" style="left:37.50px;top:187.38px;font-size:13.20px;color:#14284A;transform:scaleX(0.8829);">Manage jobs</div>
<svg style="left:100px;top:181px" width="110" height="27" viewBox="0 0 110 27"><defs><linearGradient id="tb2" x1="0" y1="0" x2="0" y2="1"><stop offset="0" stop-color="#F4FAF0"/><stop offset="0.5" stop-color="#DCEFD2"/><stop offset="1" stop-color="#A6D99A"/></linearGradient></defs><path d="M3.5 26 Q12 4 18 2 Q20 1.5 24 1.5 H90 Q96 1.5 98 6 L106 26z" fill="url(#tb2)" stroke="#6C8CB8" stroke-width="1"/></svg>
<svg style="left:119px;top:187px" width="15" height="16" viewBox="0 0 15 16"><path d="M.5 1.5h10v13h-10z" fill="#F2F2F2" stroke="#B0B0B0"/><path d="M2 5h7M2 8h7M2 11h7" stroke="#A8A8A8"/><path d="M13 0v16" stroke="#222" stroke-width="1.4"/></svg>
<div class="t" id="t33" style="left:137.80px;top:187.38px;font-size:13.20px;color:#000;font-weight:bold;transform:scaleX(0.8242);">BY LINES*</div>
<svg style="left:1256px;top:186px" width="6" height="9" viewBox="0 0 6 9"><path d="M5.5 .5v7l-5-3.5z" fill="none" stroke="#333"/></svg>
<svg style="left:1270px;top:186px" width="6" height="9" viewBox="0 0 6 9"><path d="M.5 .5v7l5-3.5z" fill="none" stroke="#333"/></svg>
<div class="a" style="left:0;top:206px;width:1280px;height:452px;background:#F0F0F0;border-left:3px solid #3F6E6C;border-right:3px solid #3F6E6C;border-top:1px solid #80B89A;box-shadow:inset 0 1px 0 #62887C;border-bottom:2px solid #3F6E6C"></div>
<div class="a" style="left:3px;top:208px;width:1274px;height:25px;background:#F4F4F4"></div>
<div class="a" style="left:27px;top:233px;width:1232px;height:383px;background:#fff"></div>
<div class="a" style="left:3px;top:233px;width:24px;height:383px;background:#F0F0F0"></div>
<div class="a" style="left:10px;top:233px;width:12px;height:95px;background:#A9A9A9"></div>
<div class="a" style="left:10px;top:328px;width:12px;height:288px;background:#FFFFFF"></div>
<div class="a" style="left:22px;top:233px;width:5px;height:383px;background:#ECECEC"></div>
<div class="a" style="left:28px;top:215px;width:1231px;height:12px;background:#fff"></div>
<div class="a" style="left:28px;top:215px;width:259px;height:12px;background:#A9A9A9"></div>
<div class="a" style="left:1199px;top:216px;width:60px;height:11px;background:#A9A9A9"></div>
<svg style="left:0;top:0" width="1280" height="240"><text x="32" y="225" font-family="Liberation Sans" font-size="9" text-anchor="middle" fill="#444">0</text><rect x="48.5" y="220.3" width="1.5" height="1.5" fill="#333"/><rect x="66.5" y="220.3" width="1.5" height="1.5" fill="#333"/><rect x="84.5" y="220.3" width="1.5" height="1.5" fill="#333"/><rect x="102.8" y="219" width="1.2" height="4" fill="#333"/><rect x="120.5" y="220.3" width="1.5" height="1.5" fill="#333"/><rect x="138.5" y="220.3" width="1.5" height="1.5" fill="#333"/><rect x="156.5" y="220.3" width="1.5" height="1.5" fill="#333"/><text x="176" y="225" font-family="Liberation Sans" font-size="9" text-anchor="middle" fill="#C07830">1</text><rect x="192.5" y="220.3" width="1.5" height="1.5" fill="#333"/><rect x="210.5" y="220.3" width="1.5" height="1.5" fill="#333"/><rect x="228.5" y="220.3" width="1.5" height="1.5" fill="#333"/><rect x="246.8" y="219" width="1.2" height="4" fill="#333"/><rect x="264.5" y="220.3" width="1.5" height="1.5" fill="#333"/><rect x="282.5" y="220.3" width="1.5" height="1.5" fill="#333"/><rect x="300.5" y="220.3" width="1.5" height="1.5" fill="#333"/><text x="320" y="225" font-family="Liberation Sans" font-size="9" text-anchor="middle" fill="#444">2</text><rect x="336.5" y="220.3" width="1.5" height="1.5" fill="#333"/><rect x="354.5" y="220.3" width="1.5" height="1.5" fill="#333"/><rect x="372.5" y="220.3" width="1.5" height="1.5" fill="#333"/><rect x="390.8" y="219" width="1.2" height="4" fill="#333"/><rect x="408.5" y="220.3" width="1.5" height="1.5" fill="#333"/><rect x="426.5" y="220.3" width="1.5" height="1.5" fill="#333"/><rect x="444.5" y="220.3" width="1.5" height="1.5" fill="#333"/><text x="464" y="225" font-family="Liberation Sans" font-size="9" text-anchor="middle" fill="#444">3</text><rect x="480.5" y="220.3" width="1.5" height="1.5" fill="#333"/><rect x="498.5" y="220.3" width="1.5" height="1.5" fill="#333"/><rect x="516.5" y="220.3" width="1.5" height="1.5" fill="#333"/><rect x="534.8" y="219" width="1.2" height="4" fill="#333"/><rect x="552.5" y="220.3" width="1.5" height="1.5" fill="#333"/><rect x="570.5" y="220.3" width="1.5" height="1.5" fill="#333"/><rect x="588.5" y="220.3" width="1.5" height="1.5" fill="#333"/><text x="608" y="225" font-family="Liberation Sans" font-size="9" text-anchor="middle" fill="#444">4</text><rect x="624.5" y="220.3" width="1.5" height="1.5" fill="#333"/><rect x="642.5" y="220.3" width="1.5" height="1.5" fill="#333"/><rect x="660.5" y="220.3" width="1.5" height="1.5" fill="#333"/><rect x="678.8" y="219" width="1.2" height="4" fill="#333"/><rect x="696.5" y="220.3" width="1.5" height="1.5" fill="#333"/><rect x="714.5" y="220.3" width="1.5" height="1.5" fill="#333"/><rect x="732.5" y="220.3" width="1.5" height="1.5" fill="#333"/><text x="752" y="225" font-family="Liberation Sans" font-size="9" text-anchor="middle" fill="#444">5</text><rect x="768.5" y="220.3" width="1.5" height="1.5" fill="#333"/><rect x="786.5" y="220.3" width="1.5" height="1.5" fill="#333"/><rect x="804.5" y="220.3" width="1.5" height="1.5" fill="#333"/><rect x="822.8" y="219" width="1.2" height="4" fill="#333"/><rect x="840.5" y="220.3" width="1.5" height="1.5" fill="#333"/><rect x="858.5" y="220.3" width="1.5" height="1.5" fill="#333"/><rect x="876.5" y="220.3" width="1.5" height="1.5" fill="#333"/><text x="896" y="225" font-family="Liberation Sans" font-size="9" text-anchor="middle" fill="#444">6</text><rect x="912.5" y="220.3" width="1.5" height="1.5" fill="#333"/><rect x="930.5" y="220.3" width="1.5" height="1.5" fill="#333"/><rect x="948.5" y="220.3" width="1.5" height="1.5" fill="#333"/><rect x="966.8" y="219" width="1.2" height="4" fill="#333"/><rect x="984.5" y="220.3" width="1.5" height="1.5" fill="#333"/><rect x="1002.5" y="220.3" width="1.5" height="1.5" fill="#333"/><rect x="1020.5" y="220.3" width="1.5" height="1.5" fill="#333"/><text x="1040" y="225" font-family="Liberation Sans" font-size="9" text-anchor="middle" fill="#444">7</text><rect x="1056.5" y="220.3" width="1.5" height="1.5" fill="#333"/><rect x="1074.5" y="220.3" width="1.5" height="1.5" fill="#333"/><rect x="1092.5" y="220.3" width="1.5" height="1.5" fill="#333"/><rect x="1110.8" y="219" width="1.2" height="4" fill="#333"/><rect x="1128.5" y="220.3" width="1.5" height="1.5" fill="#333"/><rect x="1146.5" y="220.3" width="1.5" height="1.5" fill="#333"/><rect x="1164.5" y="220.3" width="1.5" height="1.5" fill="#333"/><text x="1184" y="225" font-family="Liberation Sans" font-size="9" text-anchor="middle" fill="#444">8</text><rect x="1200.5" y="220.3" width="1.5" height="1.5" fill="#333"/><rect x="1218.5" y="220.3" width="1.5" height="1.5" fill="#333"/><rect x="1236.5" y="220.3" width="1.5" height="1.5" fill="#333"/><rect x="1254.8" y="219" width="1.2" height="4" fill="#333"/></svg>
<svg style="left:99px;top:219px" width="10" height="11" viewBox="0 0 10 11"><path d="M5 .5l4.5 10H.5z" fill="#fff" stroke="#111"/></svg>
<svg style="left:203px;top:212px" width="14" height="11" viewBox="0 0 14 11"><path d="M.5 1H12.5L7.5 9.8 6.3 7.6V9H.5Z" fill="#fff" stroke="#111" stroke-width="1.1"/><path d="M5.2 1L7.5 9.8" stroke="#111" stroke-width="1.1"/></svg>
<svg style="left:238px;top:212px" width="11" height="11" viewBox="0 0 11 11"><path d="M1 1H9.3V6.3H1Z" fill="#fff" stroke="#111" stroke-width="1.1"/><path d="M9.3 6L9.3 10.5" stroke="#111" stroke-width="1.1"/></svg>
<svg style="left:242px;top:221px" width="11" height="11" viewBox="0 0 11 11"><circle cx="5.4" cy="5" r="4.2" fill="#fff" stroke="#111" stroke-width="1.1"/></svg>
<svg style="left:257px;top:220px" width="11" height="11" viewBox="0 0 11 11"><rect x="1.1" y="1" width="8.6" height="9" fill="#fff" stroke="#111" stroke-width="1.1"/></svg>
<svg style="left:282px;top:212px" width="15" height="10" viewBox="0 0 15 10"><path d="M1 1H13.7V6.7H6.5L5 8.9 3.5 6.7H1Z" fill="#fff" stroke="#111" stroke-width="1.1"/></svg>
<svg style="left:1188px;top:221px" width="10" height="10" viewBox="0 0 10 10"><rect x=".5" y=".5" width="9" height="9" fill="#fff" stroke="#111"/></svg>
<svg style="left:1195px;top:212px" width="10" height="10" viewBox="0 0 10 10"><path d="M.5 .5h9v4l-4.5 5-4.5-5z" fill="#fff" stroke="#111"/></svg>
<div class="a" style="left:15px;top:238px;width:2px;height:2px;background:#333"></div>
<div class="a" style="left:14px;top:256px;width:4px;height:1px;background:#333"></div>
<div class="a" style="left:15px;top:292px;width:2px;height:2px;background:#333"></div>
<div class="a" style="left:15px;top:310px;width:2px;height:2px;background:#333"></div>
<svg style="left:15px;top:273px" width="10" height="10" viewBox="0 0 10 10"><rect x=".5" y=".5" width="9" height="9" fill="#fff" stroke="#111"/></svg>
<svg style="left:7px;top:324px" width="9" height="10" viewBox="0 0 9 10"><path d="M.5 .5h4l4 4.5-4 4.5h-4z" fill="#fff" stroke="#111"/></svg>
<svg style="left:0;top:0" width="40" height="640"><rect x="15" y="346" width="2" height="2" fill="#444"/><rect x="15" y="364" width="2" height="2" fill="#444"/><rect x="15" y="382" width="2" height="2" fill="#444"/><rect x="15" y="400" width="2" height="2" fill="#444"/><rect x="15" y="418" width="2" height="2" fill="#444"/><rect x="15" y="436" width="2" height="2" fill="#444"/><rect x="15" y="454" width="2" height="2" fill="#444"/><rect x="15" y="472" width="2" height="2" fill="#444"/><rect x="15" y="490" width="2" height="2" fill="#444"/><rect x="15" y="508" width="2" height="2" fill="#444"/><rect x="15" y="526" width="2" height="2" fill="#444"/><rect x="15" y="544" width="2" height="2" fill="#444"/><rect x="15" y="562" width="2" height="2" fill="#444"/><rect x="15" y="580" width="2" height="2" fill="#444"/><rect x="15" y="598" width="2" height="2" fill="#444"/><rect x="14" y="400" width="4" height="1" fill="#444"/><text x="0" y="0" transform="translate(12.5 472) rotate(90)" font-family="Liberation Sans" font-size="9" text-anchor="middle" fill="#333">2</text><rect x="14" y="544" width="4" height="1" fill="#444"/></svg>
<div class="a" style="left:32px;top:233px;width:1px;height:383px;background:#111"></div>
<div class="a" style="left:1255px;top:233px;width:3px;height:383px;background:#111"></div>
<div class="t" id="t34" style="left:1186.70px;top:238.14px;font-size:22.00px;color:#3A3A3A;font-family:'Liberation Serif';-webkit-text-stroke:0;">1</div>
<div class="a" style="left:259px;top:275.5px;width:938px;height:400px;border-left:3px solid #000;border-top:2.5px solid #000;border-right:2px solid #000"></div>
<div class="t" id="t35" style="left:235.40px;top:330.47px;font-size:21.00px;color:#3A3A3A;font-family:'Liberation Serif';-webkit-text-stroke:0;">1</div>
<div class="t" id="t36" style="left:235.40px;top:382.47px;font-size:21.00px;color:#3A3A3A;font-family:'Liberation Serif';-webkit-text-stroke:0;">2</div>
<div class="t" id="t37" style="left:235.40px;top:434.47px;font-size:21.00px;color:#3A3A3A;font-family:'Liberation Serif';-webkit-text-stroke:0;">3</div>
<div class="t" id="t38" style="left:235.40px;top:485.97px;font-size:21.00px;color:#3A3A3A;font-family:'Liberation Serif';-webkit-text-stroke:0;">4</div>
<div class="t" id="t39" style="left:235.40px;top:537.47px;font-size:21.00px;color:#3A3A3A;font-family:'Liberation Serif';-webkit-text-stroke:0;">5</div>
<div class="t" id="t40" style="left:235.40px;top:589.47px;font-size:21.00px;color:#3A3A3A;font-family:'Liberation Serif';-webkit-text-stroke:0;">6</div>
<div class="a" style="left:288px;top:302.5px;width:32px;height:52px;background:#000"></div>
<svg style="left:287px;top:332px" width="30" height="17" viewBox="0 0 30 17"><path d="M3.5 15V1.5L8 10l4.5-8.5V15M1 15h5M10 15h5M1 1.5h3M12 1.5h3" fill="none" stroke="#E6E8EC" stroke-width="1.5"/><path d="M24 1v9M20 3.5l8 4M28 3.5l-8 4" stroke="#D8D8DC" stroke-width="1.3"/></svg>
<svg style="left:325px;top:329px" width="10" height="17" viewBox="0 0 10 17"><path d="M5 1.5v14" stroke="#777" stroke-width="1.4"/><path d="M0 1.2h4.2l.8.8.8-.8H10M0 15.8h4.2l.8-.8.8.8H10" fill="none" stroke="#111" stroke-width="1.4"/></svg>
<div class="a" style="left:3px;top:616px;width:1274px;height:17px;background:#F0F0F0"></div>
<div class="a" style="left:27px;top:616px;width:1214px;height:16px;background:#CDCDCD"></div>
<svg style="left:16px;top:620px" width="6" height="9" viewBox="0 0 6 9"><path d="M5 .5L1 4.5 5 8.5" fill="none" stroke="#555" stroke-width="1.5"/></svg>
<svg style="left:1248px;top:620px" width="6" height="9" viewBox="0 0 6 9"><path d="M1 .5L5 4.5 1 8.5" fill="none" stroke="#555" stroke-width="1.5"/></svg>
<svg style="left:1266px;top:622px" width="8" height="8" viewBox="0 0 8 8"><rect x="6" y="0" width="1.3" height="1.3" fill="#A0A0A0"/><rect x="3" y="3" width="1.3" height="1.3" fill="#A0A0A0"/><rect x="6" y="3" width="1.3" height="1.3" fill="#A0A0A0"/><rect x="0" y="6" width="1.3" height="1.3" fill="#A0A0A0"/><rect x="3" y="6" width="1.3" height="1.3" fill="#A0A0A0"/><rect x="6" y="6" width="1.3" height="1.3" fill="#A0A0A0"/></svg>
<div class="a" style="left:2px;top:208px;width:1px;height:449px;background:#D8E6E0"></div><div class="a" style="left:1277px;top:208px;width:1px;height:449px;background:#E0EEE8"></div>
<svg style="left:3px;top:613px" width="16" height="20" viewBox="0 0 16 20"><path d="M7.5 2.5v16H1" fill="none" stroke="#666" stroke-width="1.2"/><path d="M9 1.5h3l1 1h2" fill="none" stroke="#777"/></svg>
<div class="a" style="left:1259px;top:233px;width:18px;height:383px;background:#F0F0F0"></div>
<div class="a" style="left:1260px;top:244px;width:15px;height:88px;background:#CDCDCD"></div>
<svg style="left:1263px;top:222px" width="9" height="6" viewBox="0 0 9 6"><path d="M.5 5L4.5 1 8.5 5" fill="none" stroke="#555" stroke-width="1.5"/></svg>
<svg style="left:1263px;top:604px" width="9" height="6" viewBox="0 0 9 6"><path d="M.5 1L4.5 5 8.5 1" fill="none" stroke="#555" stroke-width="1.5"/></svg>
<div class="a" style="left:1258px;top:209px;width:18px;height:7px;border-right:1.5px solid #777;border-bottom:1.5px solid #777;background:#fff"></div>
<div class="a" style="left:3px;top:632px;width:1274px;height:2px;background:#F6F9FE"></div>
<div class="a" style="left:3px;top:634px;width:1274px;height:2px;background:#86A4CC"></div>
<div class="a" style="left:3px;top:636px;width:873px;height:21px;background:linear-gradient(#E8F1FD,#C8DCF7 55%,#D6E6FA)"></div>
<div class="a" style="left:876px;top:636px;width:401px;height:21px;background:linear-gradient(#B2CFF4,#8EB0E0 55%,#7A9CCB);border-left:1px solid #9CB7DC"></div>
<div class="a" style="left:0;top:657px;width:1280px;height:23px;background:linear-gradient(#DCEAFC,#C5DCFA);border-top:1px solid #3F6E6C"></div>
<div class="a" style="left:463px;top:659px;width:817px;height:21px;background:linear-gradient(#C2D8F7,#A4C2EC 60%,#9CBBE8)"></div>
<div class="a" style="left:287px;top:660px;width:1px;height:20px;background:#A9C1E0;box-shadow:1px 0 0 #F4F8FE"></div>
<div class="a" style="left:463px;top:660px;width:1px;height:20px;background:#8AA8D0"></div>
<div class="t" id="t41" style="left:3.50px;top:665.44px;font-size:12.30px;color:#2A3F66;transform:scaleX(0.8590);">Page 1</div>
<div class="t" id="t42" style="left:53.50px;top:665.44px;font-size:12.30px;color:#2A3F66;transform:scaleX(0.8226);">Sec 1</div>
<div class="t" id="t43" style="left:96.00px;top:665.44px;font-size:12.30px;color:#2A3F66;transform:scaleX(0.8529);">1/1</div>
<div class="t" id="t44" style="left:140.00px;top:665.44px;font-size:12.30px;color:#2A3F66;transform:scaleX(0.9400);">(1/1)</div>
<div class="t" id="t45" style="left:297.20px;top:665.44px;font-size:12.30px;color:#2A3F66;transform:scaleX(1.0075);">At  1.8 "</div>
<div class="t" id="t46" style="left:353.50px;top:665.44px;font-size:12.30px;color:#2A3F66;transform:scaleX(1.0000);">Ln  1</div>
<div class="t" id="t47" style="left:471.50px;top:665.44px;font-size:12.30px;color:#2A3F66;transform:scaleX(0.9389);">Layout sample 1</div>
<div class="t" id="t48" style="left:567.00px;top:665.44px;font-size:12.30px;color:#2A3F66;transform:scaleX(0.9600);">CAP</div>
<div class="t" id="t49" style="left:600.50px;top:665.44px;font-size:12.30px;color:#8A9AB4;transform:scaleX(0.9750);">NUM</div>
<div class="t" id="t50" style="left:638.50px;top:665.44px;font-size:12.30px;color:#8A9AB4;transform:scaleX(0.8030);">SCRL</div>
<div class="t" id="t51" style="left:675.50px;top:665.44px;font-size:12.30px;color:#8A9AB4;transform:scaleX(0.8148);">OVR</div>
<div class="t" id="t52" style="left:714.00px;top:665.44px;font-size:12.30px;color:#2A3F66;transform:scaleX(0.9684);">Kbd Map: Default</div>
<div class="a" style="left:0;top:680px;width:1280px;height:40px;background:linear-gradient(90deg,#181010,#1E1414 40%,#140E0E 70%,#100C0C)"></div>
<div class="a" style="left:1px;top:682px;width:66px;height:36.5px;background:#EBEBEB;border:1px solid #D8D8D8"></div>
<svg style="left:4px;top:687px" width="30" height="27" viewBox="0 0 30 27"><defs><radialGradient id="shl" cx=".5" cy=".95" r=".9"><stop offset="0" stop-color="#1E88C0"/><stop offset=".5" stop-color="#2EB8D8"/><stop offset="1" stop-color="#58D8E8"/></radialGradient></defs><path d="M7 25 L1.5 15 Q0 9 4 6 Q5 2 9 2.5 Q12 0 15 1 Q18 0 21 2.5 Q25 2 26 6 Q30 9 28.5 15 L23 25 Q15 27 7 25z" fill="url(#shl)" stroke="#E8A860" stroke-width="1.2"/><path d="M10 21q5-4 10 0M8 17q7-6 14 0M6 13q9-8 18 0" fill="none" stroke="#7FE0F0" stroke-width="1" opacity=".7"/><path d="M7 25q8 2 16 0" stroke="#E0C070" stroke-width="1.5" fill="none"/></svg>
<div class="t" id="t53" style="left:36.50px;top:695.50px;font-size:12.00px;color:#111;font-weight:bold;transform:scaleX(1.0074);">Start</div>
<svg style="left:84px;top:693px" width="17" height="16" viewBox="0 0 17 16"><rect x="1.5" y="3.5" width="9" height="9" fill="none" stroke="#DDD" stroke-width="1.2"/><path d="M1 1h10M1 15h10M14 1v14" stroke="#DDD" stroke-width="1.2"/><path d="M12.5 6h3M12.5 10h3" stroke="#DDD"/></svg>
<svg style="left:134px;top:690px" width="21" height="21" viewBox="0 0 21 21"><path d="M2 12q0-10 9-10 8 0 9 9v2H7q1 5 6 5 4 0 6-2v4q-3 2-7 2-10 0-10-10zM7 9h8q-1-4-4-4t-4 4z" fill="#1E88E5"/></svg>
<svg style="left:182px;top:689px" width="23" height="22" viewBox="0 0 23 22"><circle cx="11.5" cy="11" r="10" fill="#1B62C8"/><path d="M4 10l8 5 8-5v8H4z" fill="#E8EEF8"/><path d="M4 10l8-4 8 4-8 5z" fill="#fff"/></svg>
<div class="a" style="left:220px;top:680px;width:48px;height:40px;background:#3A3535"></div>
<div class="a" style="left:220px;top:718px;width:48px;height:2px;background:#7EB6E6"></div>
<div class="a" style="left:232px;top:688px;width:24px;height:24px;border-radius:50%;background:conic-gradient(from 0deg,#E0609A 0deg,#F07890 50deg,#F5A040 110deg,#F0C040 150deg,#90C848 200deg,#70B848 240deg,#C04890 290deg,#D8509A 360deg)"></div><div class="a" style="left:239px;top:695px;width:10px;height:10px;border-radius:2px;background:#2A2222"></div>
<svg style="left:281px;top:689px" width="24" height="22" viewBox="0 0 24 22"><rect x="6" y="1" width="18" height="20" rx="1" fill="#2B7CD3"/><path d="M6 7h18M6 12h18" stroke="#41A5EE" stroke-width="1"/><rect x="0" y="5" width="13" height="13" fill="#185ABD"/><text x="6.5" y="15" font-family="Liberation Sans" font-weight="bold" font-size="9" text-anchor="middle" fill="#fff">W</text></svg>
<svg style="left:335px;top:688px" width="17" height="24" viewBox="0 0 17 24"><rect x=".5" y=".5" width="16" height="23" fill="#fff" stroke="#222"/><rect x="2.5" y="2.5" width="12" height="4" fill="#222"/><g fill="#222"><rect x="3" y="9" width="2.4" height="2.4"/><rect x="7.3" y="9" width="2.4" height="2.4"/><rect x="11.6" y="9" width="2.4" height="2.4"/><rect x="3" y="13.5" width="2.4" height="2.4"/><rect x="7.3" y="13.5" width="2.4" height="2.4"/><rect x="11.6" y="13.5" width="2.4" height="2.4"/><rect x="3" y="18" width="2.4" height="2.4"/><rect x="7.3" y="18" width="2.4" height="2.4"/><rect x="11.6" y="18" width="2.4" height="2.4"/></g></svg>
<svg style="left:383px;top:690px" width="23" height="20" viewBox="0 0 23 20"><path d="M1 3h8l2 2h11v14H1z" fill="#E8B830"/><path d="M1 7h21v12H1z" fill="#F5D36A"/><path d="M7 11h9v8h-3v-5h-3v5H7z" fill="#3AA0E0"/></svg>
<svg style="left:432px;top:688px" width="24" height="24" viewBox="0 0 24 24"><rect width="24" height="24" rx="2" fill="#fff"/><path d="M7 5l5 3-5 3-5-3zM17 5l5 3-5 3-5-3zM7 11l5 3-5 3-5-3zM17 11l5 3-5 3-5-3zM12 15l5 3-5 3-5-3z" fill="#0061FE"/></svg>
<svg style="left:481px;top:688px" width="24" height="24" viewBox="0 0 24 24"><rect width="24" height="24" fill="#EF443B"/><path d="M8 7l5 5-5 5-5-5zM14 7l5 5-5 5 -1-1 4-4-4-4z" fill="#fff"/></svg>
<svg style="left:532px;top:689px" width="22" height="22" viewBox="0 0 22 22"><circle cx="11" cy="11" r="10.5" fill="#DB4437"/><path d="M11 11L20.1 5.75A10.5 10.5 0 0 1 11 21.5z" fill="#F4C20D"/><path d="M11 11L11 21.5A10.5 10.5 0 0 1 1.9 5.75z" fill="#0F9D58"/><circle cx="11" cy="11" r="5" fill="#fff"/><circle cx="11" cy="11" r="4" fill="#4285F4"/></svg>
<svg style="left:582px;top:688px" width="24" height="24" viewBox="0 0 24 24"><rect width="24" height="24" rx="2" fill="#5DB631"/><path d="M17 6H8v12h9" fill="none" stroke="#fff" stroke-width="3.2"/></svg>
<div class="a" style="left:574px;top:718px;width:40px;height:2px;background:#7EB6E6"></div>
<svg style="left:632px;top:689px" width="23" height="22" viewBox="0 0 23 22"><rect x="1" y="3" width="13" height="17" rx="1.5" fill="#2F6FD0" transform="rotate(-15 7 11)"/><rect x="8" y="2" width="13" height="17" rx="1.5" fill="#fff" transform="rotate(12 14 10)"/><path d="M14.5 6q-4 4-3 6 1 2 3 0 2 2 3 0 1-2-3-6zM14.5 12l-1.5 3h3z" fill="#111"/></svg>
<svg style="left:681px;top:688px" width="24" height="24" viewBox="0 0 24 24"><rect width="24" height="24" rx="2" fill="#EE5A3C"/><path d="M17 6H8v12h9" fill="none" stroke="#fff" stroke-width="3.2"/></svg>
<div class="a" style="left:673px;top:718px;width:40px;height:2px;background:#7EB6E6"></div>
<svg style="left:1005px;top:692px" width="17" height="16" viewBox="0 0 17 16"><circle cx="11.5" cy="4" r="2.6" fill="none" stroke="#EEE" stroke-width="1.2"/><path d="M8 11q0-4 3.5-4t3.5 4" fill="none" stroke="#EEE" stroke-width="1.2"/><circle cx="5" cy="8" r="2.6" fill="none" stroke="#EEE" stroke-width="1.2"/><path d="M1.5 15q0-4 3.5-4t3.5 4" fill="none" stroke="#EEE" stroke-width="1.2"/></svg>
<svg style="left:1043px;top:695px" width="13" height="8" viewBox="0 0 13 8"><path d="M.5 7.5l6-6 6 6" fill="none" stroke="#EEE" stroke-width="1.1"/></svg>
<svg style="left:1067px;top:693px" width="15" height="14" viewBox="0 0 15 14"><path d="M1 13q0-12 12-12M4 13q0-9 9-9M7 13q0-6 6-6M10 13q0-3 3-3" fill="none" stroke="#BBB" stroke-width="1.1"/><rect x="11.5" y="11" width="2.5" height="2.5" fill="#fff"/></svg>
<svg style="left:1089px;top:694px" width="16" height="11" viewBox="0 0 16 11"><rect x=".5" y="1.5" width="13" height="8" fill="none" stroke="#EEE" stroke-width="1.1"/><rect x="2" y="3" width="8" height="5" fill="#EEE"/><rect x="14" y="3.5" width="1.6" height="4" fill="#EEE"/></svg>
<svg style="left:1114px;top:692px" width="15" height="15" viewBox="0 0 15 15"><path d="M4 1l3.5 2.2L4 5.4.5 3.2zM11 1l3.5 2.2L11 5.4 7.5 3.2zM4 5.6l3.5 2.2L4 10 .5 7.8zM11 5.6l3.5 2.2L11 10 7.5 7.8zM7.5 8.5L11 10.7 7.5 12.9 4 10.7z" fill="#EEE"/></svg>
<svg style="left:1137px;top:693px" width="16" height="14" viewBox="0 0 16 14"><path d="M1 5h3l4-4v12L4 9H1z" fill="none" stroke="#EEE" stroke-width="1.1"/><path d="M10 4.5q1.5 2.5 0 5M12.5 2.5q3 4.5 0 9" fill="none" stroke="#EEE" stroke-width="1.1"/></svg>
<div class="t" id="t54" style="left:1169.80px;top:685.25px;font-size:13.00px;color:#F2F2F2;transform:scaleX(0.9000);">3:56 PM</div>
<div class="t" id="t55" style="left:1164.20px;top:703.35px;font-size:13.00px;color:#F2F2F2;transform:scaleX(0.9621);">5/18/2020</div>
<svg style="left:1238px;top:691px" width="18" height="18" viewBox="0 0 18 18"><path d="M1 1h18v12h-8l-3 4v-4H1z" fill="none" stroke="#EEE" stroke-width="1.2"/></svg>
<div class="a" style="left:1276px;top:680px;width:1px;height:40px;background:#555"></div>
<div class="a" style="left:446.5px;top:123px;width:388.5px;height:433px;background:#F0F0F0;border:1px solid #888;border-right:none;box-shadow:0 2px 9px rgba(0,0,0,.22)"></div>
<div class="a" style="left:448px;top:124px;width:386px;height:25px;background:#fff"></div>
<div class="a" style="left:451px;top:128px;width:16px;height:16px;border-radius:50%;background:conic-gradient(from 0deg,#D0509A 0deg,#E8789A 60deg,#F2A048 110deg,#E88A30 150deg,#8CC040 200deg,#A8C040 250deg,#B03A80 290deg,#C8408E 360deg)"></div><div class="a" style="left:455.5px;top:132.5px;width:7px;height:7px;border-radius:45%;background:#fff"></div>
<div class="t" id="t56" style="left:470.50px;top:131.02px;font-size:12.80px;color:#222;transform:scaleX(0.9878);">Global - E-Define</div>
<svg style="left:812px;top:131px" width="11" height="11" viewBox="0 0 11 11"><path d="M.5 .5l10 10M10.5 .5l-10 10" stroke="#333" stroke-width="1"/></svg>
<div class="a" style="left:458.5px;top:158px;width:368px;height:211px;border:1px solid #DCDCDC;box-shadow:inset 1px 1px 0 #fff"></div>
<div class="a" style="left:459px;top:247.5px;width:367px;height:1px;background:#DCDCDC;box-shadow:0 1px 0 #fff"></div>
<div class="t" id="t57" style="left:465.00px;top:171.07px;font-size:11.80px;color:#262626;transform:scaleX(0.9442);">Old Text</div>
<div class="a" style="left:525px;top:169px;width:297px;height:20px;background:#F0F0F0;border:1.5px solid #9A9A9A;border-radius:1px;box-shadow:inset 0 0 0 1px #fff"></div>
<div class="t" id="t58" style="left:527.80px;top:174.17px;font-size:11.80px;color:#262626;transform:scaleX(1.0357);">m*</div>
<div class="t" id="t59" style="left:465.00px;top:194.87px;font-size:11.80px;color:#262626;transform:scaleX(0.8806);">Steno</div>
<div class="t" id="t60" style="left:489.80px;top:219.00px;font-size:11.30px;color:#262626;transform:scaleX(0.9309);">Mark/Unmark</div>
<div class="t" id="t61" style="left:511.70px;top:231.90px;font-size:11.30px;color:#262626;transform:scaleX(1.0316);">Left</div>
<div class="t" id="t62" style="left:618.80px;top:219.00px;font-size:11.30px;color:#262626;transform:scaleX(0.9324);">Mark/Unmark</div>
<div class="t" id="t63" style="left:637.50px;top:231.90px;font-size:11.30px;color:#262626;transform:scaleX(0.9962);">Right</div>
<svg style="left:563.5px;top:217.5px" width="22" height="22" viewBox="0 0 22 22"><rect x="0" y="0" width="22" height="22" fill="#F0F0F0"/><path d="M.5 21 V.5H21" fill="none" stroke="#fff"/><path d="M21.5 .5V21.5H.5" fill="none" stroke="#6E6E6E"/><path d="M20.5 1.5V20.5H1.5" fill="none" stroke="#A8A8A8"/><path d="M6 10.5l7-5v10z" fill="#000"/></svg>
<svg style="left:587.5px;top:217.5px" width="22" height="22" viewBox="0 0 22 22"><rect x="0" y="0" width="22" height="22" fill="#F0F0F0"/><path d="M.5 21 V.5H21" fill="none" stroke="#fff"/><path d="M21.5 .5V21.5H.5" fill="none" stroke="#6E6E6E"/><path d="M20.5 1.5V20.5H1.5" fill="none" stroke="#A8A8A8"/><path d="M15 10.5l-7-5v10z" fill="#000"/></svg>
<svg style="left:692.5px;top:217.5px" width="22" height="22" viewBox="0 0 22 22"><rect x="0" y="0" width="22" height="22" fill="#F0F0F0"/><path d="M.5 21 V.5H21" fill="none" stroke="#fff"/><path d="M21.5 .5V21.5H.5" fill="none" stroke="#6E6E6E"/><path d="M20.5 1.5V20.5H1.5" fill="none" stroke="#A8A8A8"/><path d="M6 10.5l7-5v10z" fill="#000"/></svg>
<svg style="left:719.5px;top:217.5px" width="22" height="22" viewBox="0 0 22 22"><rect x="0" y="0" width="22" height="22" fill="#F0F0F0"/><path d="M.5 21 V.5H21" fill="none" stroke="#fff"/><path d="M21.5 .5V21.5H.5" fill="none" stroke="#6E6E6E"/><path d="M20.5 1.5V20.5H1.5" fill="none" stroke="#A8A8A8"/><path d="M15 10.5l-7-5v10z" fill="#000"/></svg>
<div class="t" id="t64" style="left:464.80px;top:259.87px;font-size:11.80px;color:#262626;transform:scaleX(0.9462);">New <u>T</u>ext:</div>
<div class="a" style="left:525px;top:258px;width:249px;height:20px;background:#fff;border:1px solid #7AB0E6"></div>
<div class="t" id="t65" style="left:527.70px;top:262.77px;font-size:11.80px;color:#1A1A1A;transform:scaleX(0.8575);">BY MR.</div>
<div class="a" style="left:565px;top:262px;width:1px;height:13px;background:#111"></div>
<div class="a" style="left:781.5px;top:259.0px;width:36.0px;height:14.0px;background:#E1E1E1;border:1px solid #ADADAD"></div>
<div class="t" id="t66" style="left:783.40px;top:261.47px;font-size:11.80px;color:#262626;transform:scaleX(0.9500);">FS &gt;&gt;</div>
<div class="a" style="left:762.5px;top:280.0px;width:61.0px;height:14.0px;background:#E1E1E1;border:1px solid #ADADAD"></div>
<div class="t" id="t67" style="left:765.00px;top:282.57px;font-size:11.80px;color:#262626;transform:scaleX(0.9310);">Insert Field</div>
<div class="a" style="left:505.5px;top:306.5px;width:58.0px;height:20.5px;background:#E1E1E1;border:1px solid #ADADAD"></div>
<div class="t" id="t68" style="left:523.80px;top:311.87px;font-size:11.80px;color:#262626;transform:scaleX(0.8727);">C<u>a</u>p</div>
<div class="a" style="left:577.5px;top:306.5px;width:58.0px;height:20.5px;background:#CCCCCC;border:1px solid #C6C6C6"></div>
<div class="t" id="t69" style="left:587.80px;top:311.87px;font-size:11.80px;color:#A3A3A3;transform:scaleX(0.9231);">C<u>o</u>nflict</div>
<div class="a" style="left:648.0px;top:306.5px;width:58.5px;height:20.5px;background:#CCCCCC;border:1px solid #C6C6C6"></div>
<div class="t" id="t70" style="left:657.00px;top:311.87px;font-size:11.80px;color:#A3A3A3;transform:scaleX(0.9070);">S<u>u</u>ggest</div>
<div class="a" style="left:721.5px;top:306.5px;width:58.5px;height:20.5px;background:#CCCCCC;border:1px solid #C6C6C6"></div>
<div class="t" id="t71" style="left:731.00px;top:311.87px;font-size:11.80px;color:#A3A3A3;transform:scaleX(0.8605);">E<u>n</u>dings</div>
<div class="a" style="left:505.5px;top:337.5px;width:58.0px;height:20.5px;background:#E1E1E1;border:1px solid #ADADAD"></div>
<div class="t" id="t72" style="left:516.90px;top:342.47px;font-size:11.80px;color:#262626;transform:scaleX(0.8692);">Spac<u>e</u>s</div>
<div class="a" style="left:577.5px;top:337.5px;width:58.0px;height:20.5px;background:#E1E1E1;border:1px solid #ADADAD"></div>
<div class="t" id="t73" style="left:581.70px;top:342.47px;font-size:11.80px;color:#262626;transform:scaleX(0.9653);">S<u>-</u>t-i-t-c-h</div>
<div class="a" style="left:662.2px;top:340.3px;width:13px;height:13px;background:#fff;border:1px solid #333"></div>
<div class="t" id="t74" style="left:678.30px;top:341.67px;font-size:11.80px;color:#262626;transform:scaleX(0.9041);">Open with Suggestions</div>
<div class="t" id="t75" style="left:468.00px;top:387.77px;font-size:11.80px;color:#262626;transform:scaleX(0.8985);"><u>G</u>lobal Type:</div>
<div class="a" style="left:543.4px;top:383.6px;width:165px;height:20px;background:linear-gradient(#E8E8E8,#E2E2E2);border:1px solid #ACACAC"></div>
<div class="t" id="t76" style="left:546.90px;top:388.87px;font-size:11.80px;color:#262626;transform:scaleX(0.8826);">E-Define</div>
<svg style="left:695.5px;top:391.5px" width="9" height="5" viewBox="0 0 9 5"><path d="M.5 .5l4 4 4-4" fill="none" stroke="#444" stroke-width="1"/></svg>
<div class="a" style="left:714.7px;top:381.3px;width:13px;height:13px;background:#fff;border:1px solid #333"></div>
<div class="t" id="t77" style="left:730.30px;top:382.77px;font-size:11.80px;color:#262626;transform:scaleX(0.8755);">Entire Fi<u>l</u>e</div>
<div class="a" style="left:714.7px;top:398.4px;width:13px;height:13px;background:#fff;border:1px solid #333"></div>
<div class="t" id="t78" style="left:730.30px;top:399.47px;font-size:11.80px;color:#262626;transform:scaleX(0.8785);">Case Sensiti<u>v</u>e</div>
<div class="a" style="left:714.7px;top:415.3px;width:13px;height:13px;background:#fff;border:1px solid #333"></div>
<div class="t" id="t79" style="left:730.30px;top:416.67px;font-size:11.80px;color:#262626;transform:scaleX(0.8854);"><u>S</u>elective</div>
<div class="a" style="left:470.3px;top:409.7px;width:13px;height:13px;background:#fff;border:1px solid #333"></div>
<div class="t" id="t80" style="left:486.30px;top:411.17px;font-size:11.80px;color:#262626;transform:scaleX(0.9046);">Add To <u>X</u>tra Global Table</div>
<div class="a" style="left:470.3px;top:427.7px;width:13px;height:13px;background:#fff;border:1px solid #333"></div>
<div class="t" id="t81" style="left:486.30px;top:429.17px;font-size:11.80px;color:#262626;transform:scaleX(0.8870);"><u>Q</u>uick add To Personal Globals Table</div>
<div class="a" style="left:467.3px;top:501.9px;width:13px;height:13px;background:#fff;border:1px solid #CCCCCC"></div>
<div class="t" id="t82" style="left:483.00px;top:502.87px;font-size:11.80px;color:#A0A0A0;transform:scaleX(0.8872);">Generate All Possible <u>M</u>isstrokes</div>
<div class="a" style="left:659.5px;top:502.0px;width:13px;height:13px;background:#fff;border:1px solid #CCCCCC"></div>
<div class="t" id="t83" style="left:675.60px;top:503.67px;font-size:11.80px;color:#A0A0A0;transform:scaleX(0.8990);">Add <u>2</u> Cat Scratch</div>
<div class="a" style="left:477.2px;top:522.2px;width:73.0px;height:21.1px;background:#E1E1E1;border:1px solid #ADADAD"></div>
<div class="t" id="t84" style="left:488.80px;top:527.87px;font-size:11.80px;color:#262626;transform:scaleX(0.9490);">Options...</div>
<div class="a" style="left:562.3px;top:522.2px;width:73.0px;height:21.1px;background:#E1E1E1;border:2px solid #0078D7"></div>
<div class="t" id="t85" style="left:590.80px;top:527.87px;font-size:11.80px;color:#262626;transform:scaleX(0.8235);">OK</div>
<div class="a" style="left:646.3px;top:522.2px;width:73.4px;height:21.1px;background:#E1E1E1;border:1px solid #ADADAD"></div>
<div class="t" id="t86" style="left:665.80px;top:527.87px;font-size:11.80px;color:#262626;transform:scaleX(0.8703);">Cancel</div>
<div class="a" style="left:730.3px;top:522.2px;width:73.5px;height:21.1px;background:#E1E1E1;border:1px solid #ADADAD"></div>
<div class="t" id="t87" style="left:755.60px;top:527.87px;font-size:11.80px;color:#262626;transform:scaleX(0.9000);"><u>H</u>elp</div>
</body></html>
